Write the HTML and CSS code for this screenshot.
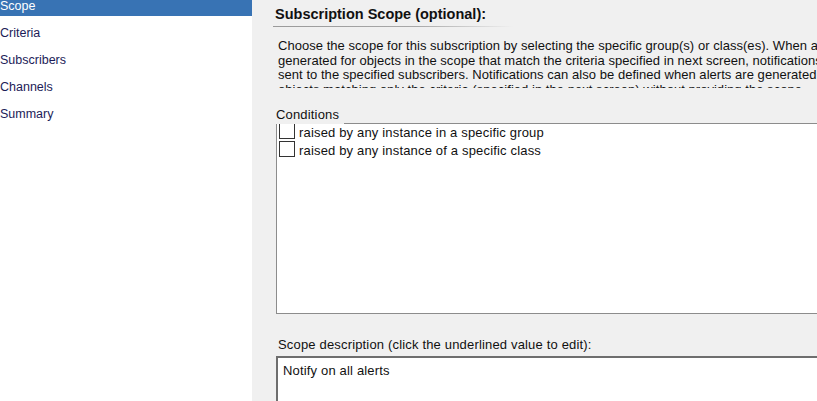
FILE: index.html
```html
<!DOCTYPE html>
<html>
<head>
<meta charset="utf-8">
<link rel="stylesheet" href="styles.css">
</head>
<body>
<nav class="sidebar">
  <div class="nav-item selected">Scope</div>
  <div class="nav-item">Criteria</div>
  <div class="nav-item">Subscribers</div>
  <div class="nav-item">Channels</div>
  <div class="nav-item">Summary</div>
</nav>
<main class="content">
  <h1 class="page-title">Subscription Scope (optional):</h1>
  <div class="title-rule"></div>
  <div class="intro">
    <div class="intro-line">Choose the scope for this subscription by selecting the specific group(s) or class(es). When alerts are</div>
    <div class="intro-line">generated for objects in the scope that match the criteria specified in next screen, notifications will be</div>
    <div class="intro-line">sent to the specified subscribers. Notifications can also be defined when alerts are generated for</div>
    <div class="intro-line">objects matching only the criteria (specified in the next screen) without providing the scope.</div>
  </div>
  <div class="group-label">Conditions</div>
  <div class="listbox">
    <div class="listbox-inner">
      <label class="check-row"><span class="checkbox"></span><span class="check-text">raised by any instance in a specific group</span></label>
      <label class="check-row"><span class="checkbox"></span><span class="check-text">raised by any instance of a specific class</span></label>
    </div>
  </div>
  <div class="desc-label">Scope description (click the underlined value to edit):</div>
  <div class="desc-box">Notify on all alerts</div>
</main>
</body>
</html>
```
FILE: styles.css
```css
html, body {
  margin: 0;
  padding: 0;
}
body {
  width: 817px;
  height: 401px;
  overflow: hidden;
  background: #f0f0f0;
  display: flex;
  font-family: "Liberation Sans", Arial, sans-serif;
  font-size: 13px;
  letter-spacing: 0.17px;
  color: #141428;
}
.sidebar {
  width: 252px;
  flex: none;
  background: #ffffff;
  margin-top: -11px;
}
.nav-item {
  height: 27px;
  box-sizing: border-box;
  padding-top: 10px;
  line-height: 14px;
  font-size: 12.5px;
  letter-spacing: 0;
  color: #1c1c58;
  white-space: nowrap;
}
.nav-item.selected {
  background: #3873b4;
  color: #ffffff;
}
.content {
  flex: 1;
  min-width: 0;
  padding-left: 21px;
  overflow: hidden;
  white-space: nowrap;
}
.page-title {
  margin: 0;
  padding: 6px 0 3px 2px;
  font-size: 14.5px;
  letter-spacing: 0;
  line-height: 17px;
  font-weight: bold;
  color: #111;
}
.title-rule {
  width: 240px;
  height: 1px;
  background: linear-gradient(to right, #9a9a9a, #a8a8a8 60%, #f0f0f0);
}
.intro {
  margin-top: 12px;
  padding-left: 5px;
  height: 49px;
  overflow: hidden;
  line-height: 14.5px;
  letter-spacing: 0.04px;
  color: #111;
}
.group-label {
  position: relative;
  z-index: 1;
  display: inline-block;
  margin: 19px 0 -1px 3px;
  padding: 1px 5px 2px 0;
  line-height: 14px;
  background: #f0f0f0;
  color: #111;
}
.listbox {
  margin-left: 3px;
  width: 700px;
  height: 191px;
  box-sizing: border-box;
  border: 1px solid #8c8c8c;
  background: #ffffff;
  overflow: hidden;
}
.listbox-inner {
  margin-top: -1px;
}
.check-row {
  display: flex;
  align-items: flex-start;
  height: 18px;
  line-height: 18px;
  color: #111;
}
.check-text {
  padding-top: 1px;
}
.checkbox {
  flex: none;
  width: 16px;
  height: 16px;
  box-sizing: border-box;
  border: 1px solid #333;
  background: #fff;
  margin: 0 4px 0 2px;
}
.desc-label {
  margin: 24px 0 0 5px;
  line-height: 14px;
  color: #111;
}
.desc-box {
  margin: 4px 0 0 3px;
  width: 700px;
  height: 60px;
  box-sizing: border-box;
  border-top: 2px solid #6e6e6e;
  border-left: 2px solid #6e6e6e;
  background: #ffffff;
  padding: 6px 0 0 5px;
  line-height: 14px;
  color: #111;
}
```
